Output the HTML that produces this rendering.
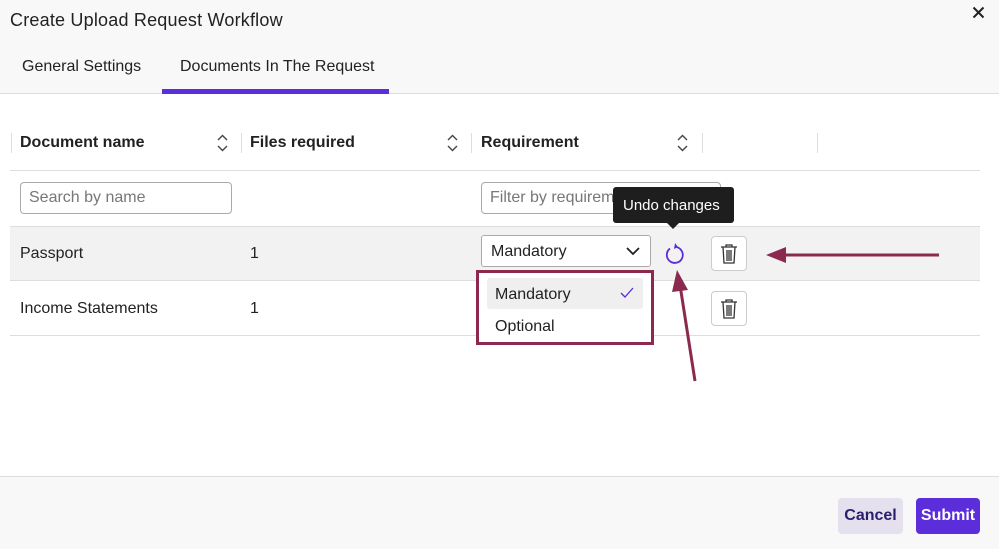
<!DOCTYPE html>
<html><head><style>
*{margin:0;padding:0;box-sizing:border-box}
body{width:999px;height:549px;overflow:hidden;background:#fff;font-family:"Liberation Sans",sans-serif;color:#222;position:relative}
.a{position:absolute}
.hdr{left:0;top:0;width:999px;height:94px;background:#f8f8f8;border-bottom:1px solid #ddd}
.ftr{left:0;top:476px;width:999px;height:73px;background:#f8f8f8;border-top:1px solid #ddd}
.th{font-weight:bold;font-size:16px;top:134px}
.sep{width:1px;height:20px;background:#ddd;top:133px}
.inp{border:1px solid #aaa;border-radius:4px;height:32px;font-size:16px;color:#777;padding:6px 8px;background:#fff}
.td{font-size:16px}
.trash{width:36px;height:35px;border:1px solid #ccc;border-radius:4px;background:#fff}
</style></head><body>
<div class="a hdr"></div>
<div class="a" style="left:10px;top:10px;font-size:18px;letter-spacing:0.2px">Create Upload Request Workflow</div>
<svg class="a" style="left:972px;top:6px" width="13" height="13"><path d="M1.5 1.5l10 10M11.5 1.5l-10 10" stroke="#222" stroke-width="2"/></svg>
<div class="a" style="left:22px;top:58px;font-size:16px">General Settings</div>
<div class="a" style="left:180px;top:58px;font-size:16px">Documents In The Request</div>
<div class="a" style="left:162px;top:89px;width:227px;height:5px;background:#5b2ddb"></div>

<div class="a sep" style="left:11px"></div>
<div class="a th" style="left:20px">Document name</div>
<div class="a sep" style="left:241px"></div>
<div class="a th" style="left:250px">Files required</div>
<div class="a sep" style="left:471px"></div>
<div class="a th" style="left:481px">Requirement</div>
<div class="a sep" style="left:702px"></div>
<div class="a sep" style="left:817px"></div>
<svg class="a" style="left:0;top:0" width="999" height="160">
<g fill="none" stroke="#444" stroke-width="1.4">
<path d="M218 140l4.5-4.5 4.5 4.5M218 146l4.5 4.5 4.5-4.5"/>
<path d="M448 140l4.5-4.5 4.5 4.5M448 146l4.5 4.5 4.5-4.5"/>
<path d="M678 140l4.5-4.5 4.5 4.5M678 146l4.5 4.5 4.5-4.5"/>
</g></svg>
<div class="a" style="left:10px;top:170px;width:970px;height:1px;background:#ddd"></div>

<div class="a inp" style="left:20px;top:182px;width:212px">Search by name</div>
<div class="a inp" style="left:481px;top:182px;width:240px;overflow:hidden;white-space:nowrap">Filter by requirement</div>

<div class="a" style="left:10px;top:226px;width:970px;height:55px;background:#f2f2f2;border-top:1px solid #ddd;border-bottom:1px solid #ddd"></div>
<div class="a td" style="left:20px;top:245px">Passport</div>
<div class="a td" style="left:250px;top:245px">1</div>
<div class="a td" style="left:20px;top:300px">Income Statements</div>
<div class="a td" style="left:250px;top:300px">1</div>
<div class="a" style="left:10px;top:335px;width:970px;height:1px;background:#ddd"></div>

<div class="a" style="left:481px;top:235px;width:170px;height:32px;border:1px solid #aaa;border-radius:3px;background:#fff"></div>
<div class="a td" style="left:491px;top:243px">Mandatory</div>
<svg class="a" style="left:625px;top:245px" width="16" height="12"><path d="M2 3l6 6 6-6" fill="none" stroke="#222" stroke-width="1.8"/></svg>
<div class="a" style="left:476px;top:270px;width:178px;height:75px;border:3px solid #8b2a4e;background:#fff"></div>
<div class="a" style="left:487px;top:278px;width:156px;height:31px;background:#efefef;border-radius:3px"></div>
<div class="a td" style="left:495px;top:286px">Mandatory</div>
<svg class="a" style="left:619px;top:286px" width="16" height="14"><path d="M2 7l4 4 8-9" fill="none" stroke="#5b2ddb" stroke-width="1.3"/></svg>
<div class="a td" style="left:495px;top:318px">Optional</div>

<div class="a" style="left:613px;top:187px;width:121px;height:36px;background:#1e1e1e;border-radius:3px;color:#fff;font-size:15px;padding:10px 0 0 10px">Undo changes</div>
<div class="a" style="left:667px;top:223px;width:0;height:0;border-left:6px solid transparent;border-right:6px solid transparent;border-top:6px solid #1e1e1e"></div>
<svg class="a" style="left:662px;top:242px" width="24" height="24"><path d="M8 6.5A8 8 0 1 0 14 5" fill="none" stroke="#5b2ddb" stroke-width="1.8"/><path d="M13 1l3 4-4 2z" fill="#5b2ddb"/></svg>

<div class="a trash" style="left:711px;top:236px"></div>
<div class="a trash" style="left:711px;top:291px"></div>
<svg class="a" style="left:719px;top:243px" width="20" height="22"><path d="M2 4h16M7 4V2h6v2M4 4l1 16h10l1-16M8 7v11M10 7v11M12 7v11" fill="none" stroke="#333" stroke-width="1.3"/></svg>
<svg class="a" style="left:719px;top:298px" width="20" height="22"><path d="M2 4h16M7 4V2h6v2M4 4l1 16h10l1-16M8 7v11M10 7v11M12 7v11" fill="none" stroke="#333" stroke-width="1.3"/></svg>

<svg class="a" style="left:0;top:0" width="999" height="549">
<path d="M939 255H780" stroke="#8b2a4e" stroke-width="3"/><path d="M766 255l20-8v16z" fill="#8b2a4e"/>
<path d="M695 381L680 285" stroke="#8b2a4e" stroke-width="3"/><path d="M677 270l11 20-16 2z" fill="#8b2a4e"/>
</svg>

<div class="a ftr"></div>
<div class="a" style="left:838px;top:498px;width:65px;height:36px;background:#e4e0ee;border-radius:4px;color:#2a1f6e;font-weight:bold;font-size:16px;text-align:center;line-height:36px">Cancel</div>
<div class="a" style="left:916px;top:498px;width:64px;height:36px;background:#5b2ddb;border-radius:4px;color:#fff;font-weight:bold;font-size:16px;text-align:center;line-height:36px">Submit</div>
</body></html>
